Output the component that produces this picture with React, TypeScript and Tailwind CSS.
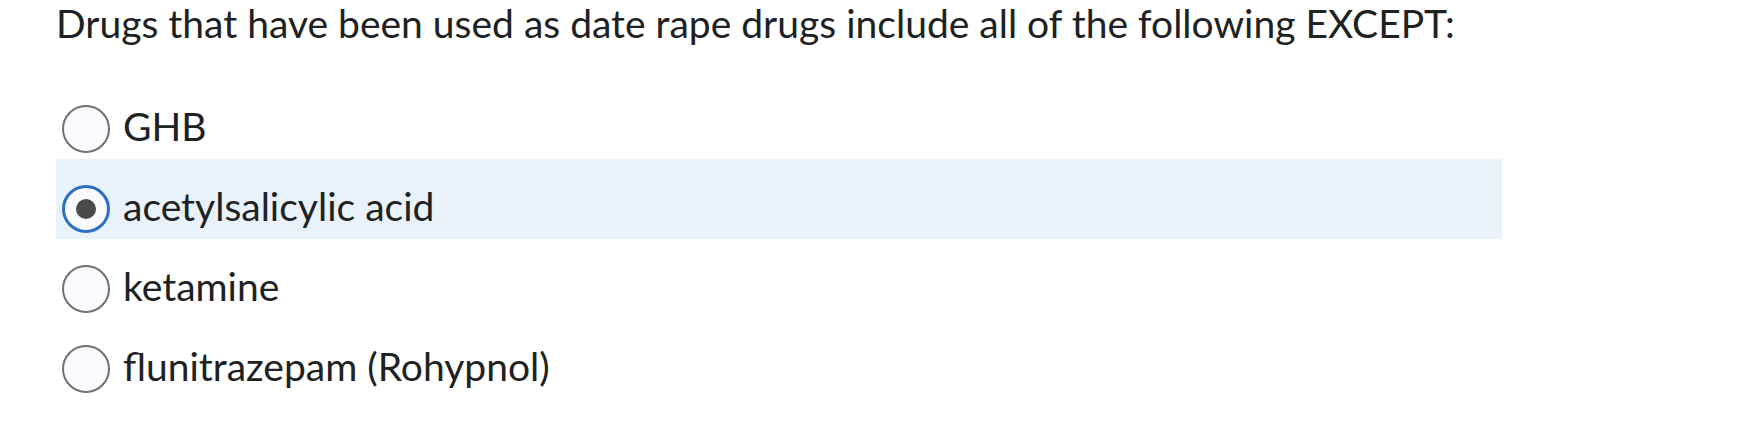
import React from "react";

const options = [
  { label: "GHB", selected: false },
  { label: "acetylsalicylic acid", selected: true },
  { label: "ketamine", selected: false },
  { label: "flunitrazepam (Rohypnol)", selected: false },
];

function Radio({ selected }: { selected: boolean }) {
  if (selected) {
    return (
      <span className="flex h-[48px] w-[48px] shrink-0 items-center justify-center rounded-full border-[3px] border-[#2d6fc4] bg-[#f9fbff]">
        <span className="h-[20px] w-[20px] rounded-full bg-[#4a4a4c]" />
      </span>
    );
  }
  return (
    <span className="h-[48px] w-[48px] shrink-0 rounded-full border-2 border-[#707070] bg-[#f9fbff]" />
  );
}

export default function App() {
  return (
    <div
      className="h-[428px] w-full bg-white pl-[56px] text-[#202122]"
      style={{ fontFamily: "Lato, 'Noto Sans', sans-serif" }}
    >
      <div className="w-[1446px]">
        <h1 className="mb-[33px] text-[39px] leading-[46px] font-normal">
          Drugs that have been used as date rape drugs include all of the following EXCEPT:
        </h1>
        <div className="flex flex-col">
          {options.map((o) => (
            <label
              key={o.label}
              className={`flex h-[80px] items-center gap-[13px] pl-[6px] pt-[20px] ${
                o.selected ? "bg-[#e9f1fb]" : ""
              }`}
            >
              <Radio selected={o.selected} />
              <span className="pb-[7px] text-[39px] leading-[46px]">{o.label}</span>
            </label>
          ))}
        </div>
      </div>
    </div>
  );
}
